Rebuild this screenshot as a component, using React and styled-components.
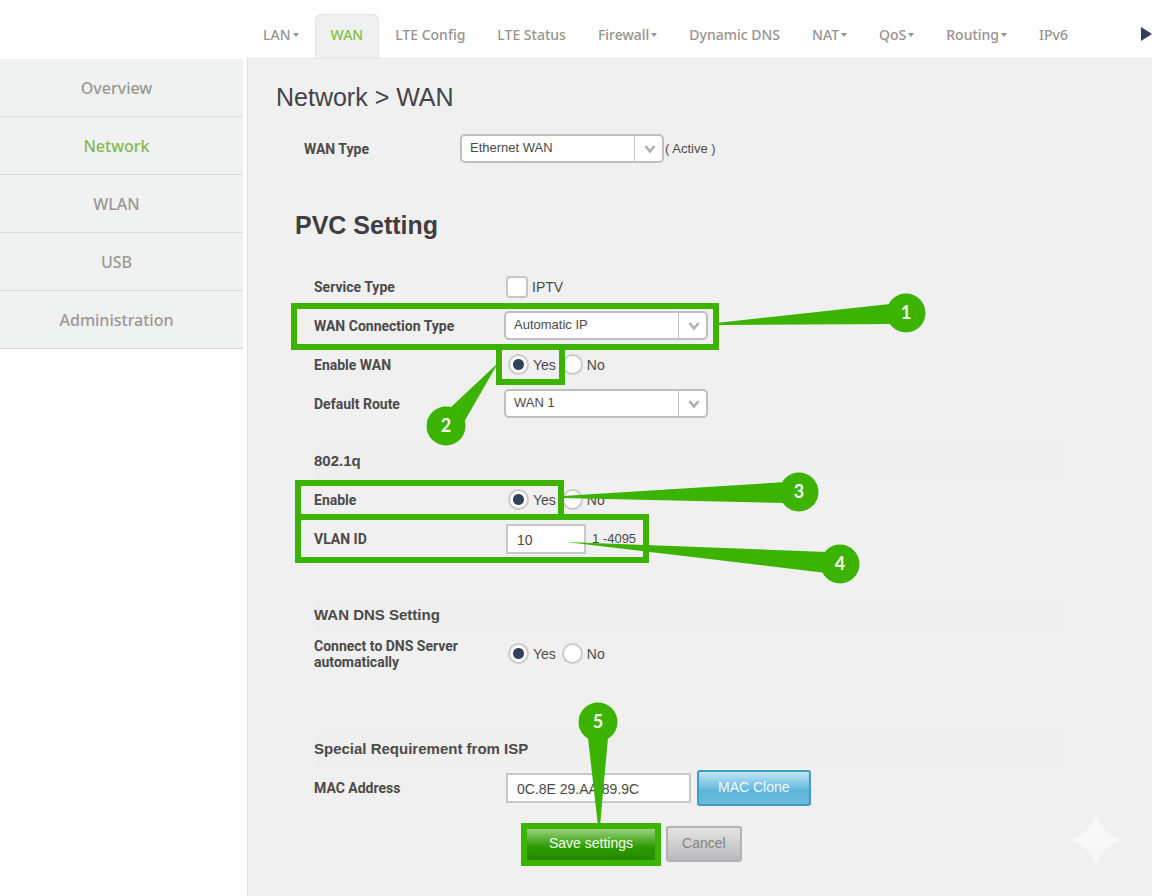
import React from "react";
import styled, { createGlobalStyle, css } from "styled-components";

const GREEN = "#3bb300";

const GlobalStyle = createGlobalStyle`
  *, *::before, *::after { box-sizing: border-box; }
  body {
    margin: 0;
    background: #fefefe;
    color: #4c4a48;
    font-family: "Liberation Sans", Arial, sans-serif;
    font-size: 14px;
  }
  button, input, select { font: inherit; color: inherit; margin: 0; }
`;

const Page = styled.div`
  position: relative;
  display: grid;
  grid-template-columns: 243px minmax(0, 1fr);
  column-gap: 4px;
  min-height: 100vh;
`;

const Sidebar = styled.nav`
  padding-top: 59px;
`;

const SideLink = styled.a`
  display: flex;
  align-items: center;
  justify-content: center;
  height: 58px;
  padding-right: 10px;
  background: #f0f1f1;
  border-bottom: 1px solid #d9dada;
  color: ${(p) => (p.$active ? "#82bb52" : "#9c9893")};
  font-family: "Noto Sans", sans-serif;
  font-size: 16px;
  font-weight: 500;
  text-decoration: none;
`;

const Column = styled.div`
  display: flex;
  flex-direction: column;
`;

const TabBar = styled.nav`
  display: flex;
  align-items: flex-end;
  height: 58px;
`;

const Tab = styled.a`
  display: flex;
  align-items: center;
  gap: 2px;
  height: 44px;
  padding: 0 16px 4px;
  border: 1px solid transparent;
  border-width: 1px 0 0;
  color: #98938f;
  font-family: "Noto Sans", sans-serif;
  font-size: 14px;
  font-weight: 500;
  white-space: nowrap;
  text-decoration: none;
  ${(p) =>
    p.$active &&
    css`
      height: 45px;
      margin-bottom: -1px;
      padding-bottom: 5px;
      background: #f0f0f0;
      border-color: #e3e4e4;
      border-radius: 6px 6px 0 0;
      box-shadow: inset 1px 0 #e3e4e4, inset -1px 0 #e3e4e4;
      color: #7fbf45;
    `}
`;

const MoreTabs = styled.button`
  display: flex;
  align-items: center;
  height: 44px;
  margin-left: auto;
  padding: 0 0 4px;
  border: 0;
  background: none;
`;

const Panel = styled.main`
  flex: 1;
  padding: 20px 28px;
  background: #f0f0f0;
  border-top: 1px solid #e3e4e4;
  border-left: 1px solid #dfe0e0;
`;

const PageTitle = styled.h1`
  margin: 0 0 14px;
  color: #43434a;
  font-size: 25px;
  font-weight: 400;
  line-height: 36px;
`;

const SectionTitle = styled.h2`
  margin: 39px 0 24px 19px;
  color: #3e3e42;
  font-size: 25px;
  font-weight: 700;
  line-height: 36px;
`;

const Group = styled.section`
  margin: 0 56px ${(p) => p.$after || 0}px 38px;
`;

const GroupTitle = styled.h3`
  margin: 0;
  background: #efefef;
  font-size: 15px;
  font-weight: 700;
  line-height: 38px;
`;

const Row = styled.div`
  display: grid;
  grid-template-columns: ${(p) => p.$label || 190}px 1fr;
  align-items: center;
  min-height: 39px;
  margin-left: ${(p) => p.$indent || 0}px;
`;

const labelText = css`
  font-family: Roboto, sans-serif;
  font-size: 14px;
  font-weight: 700;
  line-height: 16px;
`;

const Label = styled.label`
  ${labelText}
`;

const Legend = styled.span`
  ${labelText}
  max-width: 160px;
`;

const Controls = styled.div`
  display: flex;
  align-items: center;
  gap: ${(p) => p.$gap || 6}px;
  padding-left: ${(p) => p.$inset || 0}px;
`;

const SelectFrame = styled.span`
  display: inline-grid;
  width: 204px;
  height: 29px;
`;

const SelectBox = styled.select`
  grid-area: 1 / 1;
  appearance: none;
  padding: 0 40px 2px 8px;
  background: #ffffff;
  border: 2px solid #bfbfbf;
  border-radius: 5px;
  font-size: 13px;
`;

const SelectArrow = styled.span`
  grid-area: 1 / 1;
  justify-self: end;
  display: flex;
  align-items: center;
  justify-content: center;
  width: 30px;
  height: 29px;
  border-left: 1px solid #c4c4c4;
  pointer-events: none;
`;

const Choice = styled.label`
  display: flex;
  align-items: center;
  gap: 4px;
`;

const Tick = styled.input`
  appearance: none;
  width: 22px;
  height: 22px;
  background: #ffffff;
  border: 2px solid #c6c6c6;
  border-radius: 4px;
`;

const Radio = styled.input`
  appearance: none;
  width: 21px;
  height: 21px;
  background: #ffffff;
  border: 2px solid #cbcbcb;
  border-radius: 50%;
  &:checked {
    background: radial-gradient(circle, #35405f 5px, #ffffff 6px);
  }
`;

const Field = styled.input`
  width: ${(p) => p.$width}px;
  height: 30px;
  padding: 2px 9px 0;
  background: #ffffff;
  border: 2px solid #c8c8c8;
`;

const Note = styled.span`
  font-size: 13px;
`;

const buttonKinds = {
  blue: css`
    color: #f4fbff;
    border-color: #3f9dc4;
    background: linear-gradient(#c5e6f4, #7cc6e6 40%, #5cb3d9 60%, #6dbbdc);
  `,
  green: css`
    color: #f5fff0;
    border-color: #2f9400;
    background: linear-gradient(#a2d58c, #5bb236 35%, #2d9a00 60%, #238a00);
  `,
  grey: css`
    color: #84847f;
    border-color: #b2b2b5;
    background: linear-gradient(#e4e4e4, #cfcfd0 50%, #b9b9bb);
  `,
};

const Button = styled.button`
  height: 36px;
  padding: 0 ${(p) => p.$pad}px 2px;
  border: 2px solid;
  border-radius: 3px;
  ${(p) => buttonKinds[p.$kind]}
`;

const Actions = styled.div`
  display: flex;
  gap: 8px;
  padding: 19px 0 0 248px;
`;

const Overlay = styled.svg`
  position: absolute;
  inset: 0;
  width: 100%;
  height: 100%;
  pointer-events: none;
`;

const CalloutNumber = styled.text`
  fill: #f3fff0;
  font-family: Lato, sans-serif;
  font-size: 18px;
  font-weight: 700;
  text-anchor: middle;
`;

const sideItems = ["Overview", "Network", "WLAN", "USB", "Administration"];

const tabs = [
  { name: "LAN", menu: true },
  { name: "WAN" },
  { name: "LTE Config" },
  { name: "LTE Status" },
  { name: "Firewall", menu: true },
  { name: "Dynamic DNS" },
  { name: "NAT", menu: true },
  { name: "QoS", menu: true },
  { name: "Routing", menu: true },
  { name: "IPv6" },
];

const highlights = [
  { x: 294, y: 306, w: 422, h: 41 },
  { x: 499, y: 347, w: 63, h: 35 },
  { x: 298, y: 483, w: 263, h: 34 },
  { x: 298, y: 517, w: 348, h: 43 },
  { x: 524, y: 826, w: 134, h: 37 },
];

const callouts = [
  { n: 1, x: 906, y: 313, tail: "716,325 716,323 890,304 892,324" },
  { n: 2, x: 446, y: 426, tail: "498,363 450,408 464,422" },
  { n: 3, x: 799, y: 492, tail: "562,498 562,496 786,482 786,503" },
  { n: 4, x: 840, y: 564, tail: "566,542 826,552 826,573" },
  { n: 5, x: 598, y: 722, tail: "600,826 598,826 588,738 608,738" },
];

function Select({ id, value }) {
  return (
    <SelectFrame>
      <SelectBox id={id} defaultValue={value}>
        <option>{value}</option>
      </SelectBox>
      <SelectArrow>
        <svg width="12" height="10" viewBox="0 0 12 10" aria-hidden="true">
          <path d="M1.5 2 L6 7.5 L10.5 2" fill="none" stroke="#b0b0b0" strokeWidth="2.6" />
        </svg>
      </SelectArrow>
    </SelectFrame>
  );
}

function YesNo({ name, label }) {
  return (
    <Controls $inset={4} role="radiogroup" aria-label={label}>
      <Choice>
        <Radio type="radio" name={name} defaultChecked />
        Yes
      </Choice>
      <Choice>
        <Radio type="radio" name={name} />
        No
      </Choice>
    </Controls>
  );
}

export default function App() {
  return (
    <>
      <GlobalStyle />
      <Page>
        <Sidebar>
          {sideItems.map((item) => (
            <SideLink key={item} href="#" $active={item === "Network"}>
              {item}
            </SideLink>
          ))}
        </Sidebar>
        <Column>
          <TabBar>
            {tabs.map((tab) => (
              <Tab key={tab.name} href="#" $active={tab.name === "WAN"}>
                {tab.name}
                {tab.menu && (
                  <svg width="6" height="4" viewBox="0 0 6 4" aria-hidden="true">
                    <path d="M0 0H6L3 4Z" fill="#98938f" />
                  </svg>
                )}
              </Tab>
            ))}
            <MoreTabs aria-label="More tabs">
              <svg width="12" height="14" viewBox="0 0 12 14" aria-hidden="true">
                <path d="M1 0L12 7L1 14Z" fill="#353d59" />
              </svg>
            </MoreTabs>
          </TabBar>
          <Panel>
            <PageTitle>Network &gt; WAN</PageTitle>
            <Row $label={156} $indent={28}>
              <Label htmlFor="wan-type">WAN Type</Label>
              <Controls $gap={1}>
                <Select id="wan-type" value="Ethernet WAN" />
                <Note>( Active )</Note>
              </Controls>
            </Row>
            <SectionTitle>PVC Setting</SectionTitle>
            <Group $after={19}>
              <Row>
                <Legend>Service Type</Legend>
                <Controls $inset={2}>
                  <Choice>
                    <Tick type="checkbox" />
                    IPTV
                  </Choice>
                </Controls>
              </Row>
              <Row>
                <Label htmlFor="connection">WAN Connection Type</Label>
                <Select id="connection" value="Automatic IP" />
              </Row>
              <Row>
                <Legend>Enable WAN</Legend>
                <YesNo name="enable-wan" label="Enable WAN" />
              </Row>
              <Row>
                <Label htmlFor="route">Default Route</Label>
                <Select id="route" value="WAN 1" />
              </Row>
            </Group>
            <Group $after={38}>
              <GroupTitle>802.1q</GroupTitle>
              <Row>
                <Legend>Enable</Legend>
                <YesNo name="enable-vlan" label="Enable 802.1q" />
              </Row>
              <Row>
                <Label htmlFor="vlan">VLAN ID</Label>
                <Controls $inset={2}>
                  <Field id="vlan" $width={80} defaultValue="10" />
                  <Note>1 -4095</Note>
                </Controls>
              </Row>
            </Group>
            <Group $after={57}>
              <GroupTitle>WAN DNS Setting</GroupTitle>
              <Row>
                <Legend>Connect to DNS Server automatically</Legend>
                <YesNo name="dns" label="Connect to DNS Server automatically" />
              </Row>
            </Group>
            <Group>
              <GroupTitle>Special Requirement from ISP</GroupTitle>
              <Row>
                <Label htmlFor="mac">MAC Address</Label>
                <Controls $inset={2}>
                  <Field id="mac" $width={185} defaultValue="0C.8E 29.AA.89.9C" />
                  <Button type="button" $kind="blue" $pad={19}>
                    MAC Clone
                  </Button>
                </Controls>
              </Row>
            </Group>
            <Actions>
              <Button type="submit" $kind="green" $pad={23}>
                Save settings
              </Button>
              <Button type="button" $kind="grey" $pad={14}>
                Cancel
              </Button>
            </Actions>
          </Panel>
        </Column>
        <Overlay>
          <path
            d="M1096 816 Q1103 833 1120 840 Q1103 847 1096 864 Q1089 847 1072 840 Q1089 833 1096 816Z"
            fill="#f8f8f8"
          />
          {highlights.map((b) => (
            <rect
              key={`${b.x}-${b.y}`}
              x={b.x}
              y={b.y}
              width={b.w}
              height={b.h}
              fill="none"
              stroke={GREEN}
              strokeWidth="6"
            />
          ))}
          {callouts.map((c) => (
            <g key={c.n}>
              <polygon points={c.tail} fill={GREEN} />
              <circle cx={c.x} cy={c.y} r="19.5" fill={GREEN} />
              <CalloutNumber x={c.x} y={c.y + 6}>
                {c.n}
              </CalloutNumber>
            </g>
          ))}
        </Overlay>
      </Page>
    </>
  );
}
